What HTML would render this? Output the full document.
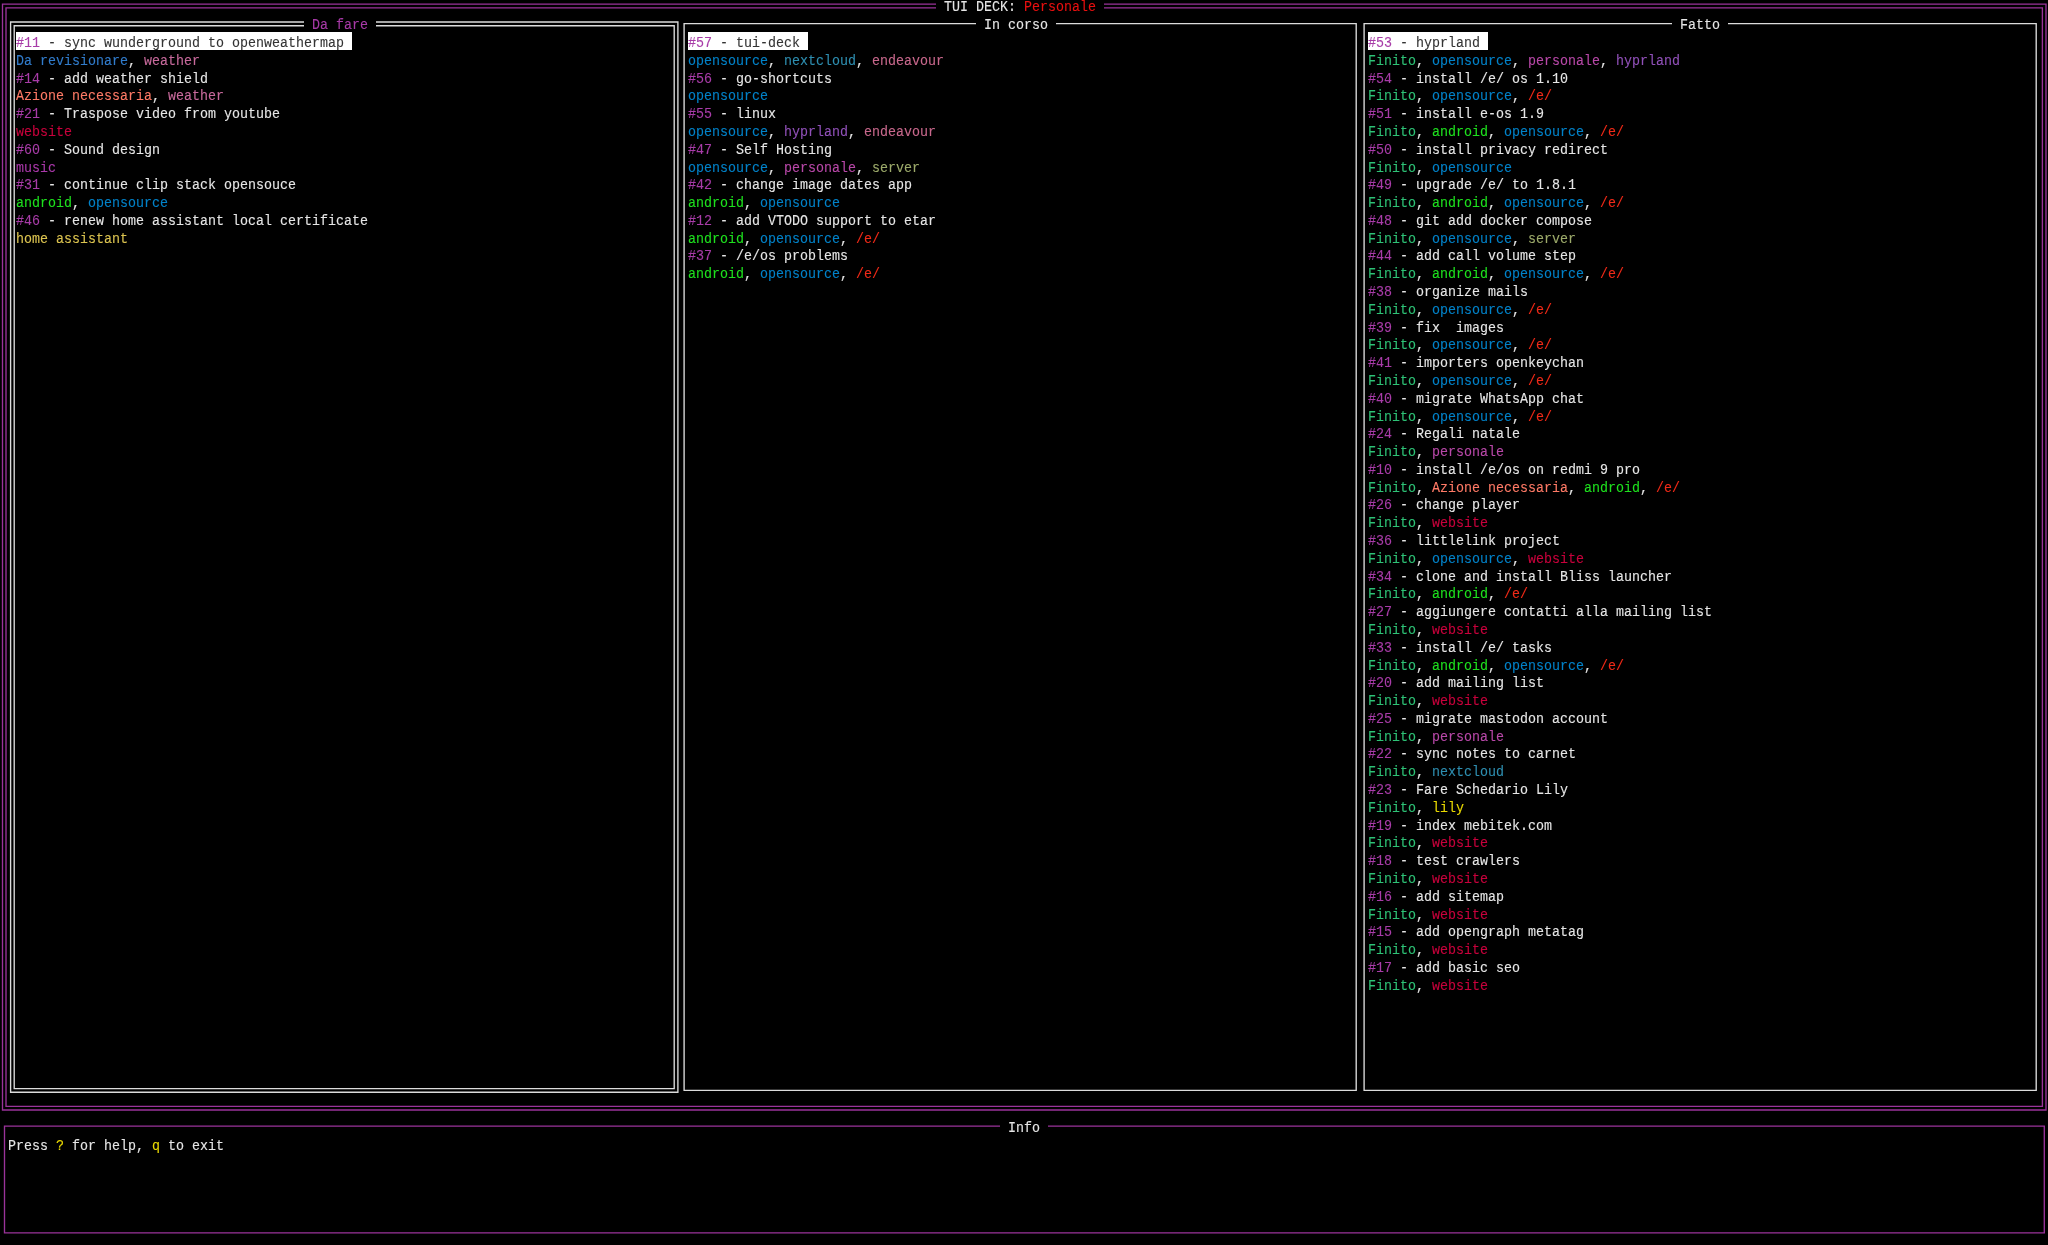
<!DOCTYPE html>
<html><head><meta charset="utf-8"><style>
html,body{margin:0;padding:0;background:#000;width:2048px;height:1245px;overflow:hidden;position:relative}
.t{position:absolute;white-space:pre;transform:scaleY(1.04);transform-origin:0 12.44px;-webkit-text-stroke:0.1px currentColor;font-family:"Liberation Mono",monospace;font-size:13.333px;line-height:17.786px;height:17.786px;color:#e6e6e6}
.hl{position:absolute;background:#fff}
#wrap{position:absolute;left:0;top:0;width:2048px;height:1245px;will-change:transform}
svg{position:absolute;left:0;top:0}
</style></head><body>
<svg width="2048" height="1245" viewBox="0 0 2048 1245" shape-rendering="geometricPrecision"><path d="M1104,4.15 H2046.0 V1110.0 H2.5 V4.15 H936" fill="none" stroke="#9a339a" stroke-width="1.35" stroke-linejoin="miter"/><path d="M1104,7.9 H2042.4 V1106.4 H6.0 V7.9 H936" fill="none" stroke="#9a339a" stroke-width="1.35" stroke-linejoin="miter"/><path d="M376,22.0 H677.9 V1092.2 H10.6 V22.0 H304" fill="none" stroke="#dcdcdc" stroke-width="1.35" stroke-linejoin="miter"/><path d="M376,25.7 H674.2 V1088.6 H14.2 V25.7 H304" fill="none" stroke="#dcdcdc" stroke-width="1.35" stroke-linejoin="miter"/><path d="M1056,23.6 H1356.2 V1090.4 H684.1 V23.6 H976" fill="none" stroke="#dcdcdc" stroke-width="1.35" stroke-linejoin="miter"/><path d="M1728,23.6 H2036.2 V1090.4 H1364.1 V23.6 H1672" fill="none" stroke="#dcdcdc" stroke-width="1.35" stroke-linejoin="miter"/><path d="M1048,1126.1 H2044.3 V1232.8 H4.5 V1126.1 H1000" fill="none" stroke="#9a339a" stroke-width="1.35" stroke-linejoin="miter"/></svg>
<div id="wrap">
<div class="hl" style="left:16.0px;top:32.2px;width:336.0px;height:17.70px"></div>
<div class="hl" style="left:688.0px;top:32.2px;width:120.0px;height:17.70px"></div>
<div class="hl" style="left:1368.0px;top:32.2px;width:120.0px;height:17.70px"></div>
<div class="t" style="left:16.0px;top:35.002px"><span style="color:#a83ca8">#11</span><span style="color:#333"> - sync wunderground to openweathermap</span></div>
<div class="t" style="left:16.0px;top:52.788px"><span style="color:#317ccc">Da revisionare</span><span style="color:#e6e6e6">, </span><span style="color:#c86a9c">weather</span></div>
<div class="t" style="left:16.0px;top:70.574px"><span style="color:#a83ca8">#14</span><span style="color:#e6e6e6"> - add weather shield</span></div>
<div class="t" style="left:16.0px;top:88.360px"><span style="color:#ff7a66">Azione necessaria</span><span style="color:#e6e6e6">, </span><span style="color:#c86a9c">weather</span></div>
<div class="t" style="left:16.0px;top:106.146px"><span style="color:#a83ca8">#21</span><span style="color:#e6e6e6"> - Traspose video from youtube</span></div>
<div class="t" style="left:16.0px;top:123.932px"><span style="color:#c8003c">website</span></div>
<div class="t" style="left:16.0px;top:141.718px"><span style="color:#a83ca8">#60</span><span style="color:#e6e6e6"> - Sound design</span></div>
<div class="t" style="left:16.0px;top:159.504px"><span style="color:#aa38aa">music</span></div>
<div class="t" style="left:16.0px;top:177.290px"><span style="color:#a83ca8">#31</span><span style="color:#e6e6e6"> - continue clip stack opensouce</span></div>
<div class="t" style="left:16.0px;top:195.076px"><span style="color:#1ee01e">android</span><span style="color:#e6e6e6">, </span><span style="color:#0082c9">opensource</span></div>
<div class="t" style="left:16.0px;top:212.862px"><span style="color:#a83ca8">#46</span><span style="color:#e6e6e6"> - renew home assistant local certificate</span></div>
<div class="t" style="left:16.0px;top:230.648px"><span style="color:#dcc450">home assistant</span></div>
<div class="t" style="left:688.0px;top:35.002px"><span style="color:#a83ca8">#57</span><span style="color:#333"> - tui-deck</span></div>
<div class="t" style="left:688.0px;top:52.788px"><span style="color:#0082c9">opensource</span><span style="color:#e6e6e6">, </span><span style="color:#2e8eb0">nextcloud</span><span style="color:#e6e6e6">, </span><span style="color:#c8688c">endeavour</span></div>
<div class="t" style="left:688.0px;top:70.574px"><span style="color:#a83ca8">#56</span><span style="color:#e6e6e6"> - go-shortcuts</span></div>
<div class="t" style="left:688.0px;top:88.360px"><span style="color:#0082c9">opensource</span></div>
<div class="t" style="left:688.0px;top:106.146px"><span style="color:#a83ca8">#55</span><span style="color:#e6e6e6"> - linux</span></div>
<div class="t" style="left:688.0px;top:123.932px"><span style="color:#0082c9">opensource</span><span style="color:#e6e6e6">, </span><span style="color:#9050b8">hyprland</span><span style="color:#e6e6e6">, </span><span style="color:#c8688c">endeavour</span></div>
<div class="t" style="left:688.0px;top:141.718px"><span style="color:#a83ca8">#47</span><span style="color:#e6e6e6"> - Self Hosting</span></div>
<div class="t" style="left:688.0px;top:159.504px"><span style="color:#0082c9">opensource</span><span style="color:#e6e6e6">, </span><span style="color:#b848a8">personale</span><span style="color:#e6e6e6">, </span><span style="color:#9caa6a">server</span></div>
<div class="t" style="left:688.0px;top:177.290px"><span style="color:#a83ca8">#42</span><span style="color:#e6e6e6"> - change image dates app</span></div>
<div class="t" style="left:688.0px;top:195.076px"><span style="color:#1ee01e">android</span><span style="color:#e6e6e6">, </span><span style="color:#0082c9">opensource</span></div>
<div class="t" style="left:688.0px;top:212.862px"><span style="color:#a83ca8">#12</span><span style="color:#e6e6e6"> - add VTODO support to etar</span></div>
<div class="t" style="left:688.0px;top:230.648px"><span style="color:#1ee01e">android</span><span style="color:#e6e6e6">, </span><span style="color:#0082c9">opensource</span><span style="color:#e6e6e6">, </span><span style="color:#f02a18">/e/</span></div>
<div class="t" style="left:688.0px;top:248.434px"><span style="color:#a83ca8">#37</span><span style="color:#e6e6e6"> - /e/os problems</span></div>
<div class="t" style="left:688.0px;top:266.220px"><span style="color:#1ee01e">android</span><span style="color:#e6e6e6">, </span><span style="color:#0082c9">opensource</span><span style="color:#e6e6e6">, </span><span style="color:#f02a18">/e/</span></div>
<div class="t" style="left:1368.0px;top:35.002px"><span style="color:#a83ca8">#53</span><span style="color:#333"> - hyprland</span></div>
<div class="t" style="left:1368.0px;top:52.788px"><span style="color:#2ec276">Finito</span><span style="color:#e6e6e6">, </span><span style="color:#0082c9">opensource</span><span style="color:#e6e6e6">, </span><span style="color:#b848a8">personale</span><span style="color:#e6e6e6">, </span><span style="color:#9050b8">hyprland</span></div>
<div class="t" style="left:1368.0px;top:70.574px"><span style="color:#a83ca8">#54</span><span style="color:#e6e6e6"> - install /e/ os 1.10</span></div>
<div class="t" style="left:1368.0px;top:88.360px"><span style="color:#2ec276">Finito</span><span style="color:#e6e6e6">, </span><span style="color:#0082c9">opensource</span><span style="color:#e6e6e6">, </span><span style="color:#f02a18">/e/</span></div>
<div class="t" style="left:1368.0px;top:106.146px"><span style="color:#a83ca8">#51</span><span style="color:#e6e6e6"> - install e-os 1.9</span></div>
<div class="t" style="left:1368.0px;top:123.932px"><span style="color:#2ec276">Finito</span><span style="color:#e6e6e6">, </span><span style="color:#1ee01e">android</span><span style="color:#e6e6e6">, </span><span style="color:#0082c9">opensource</span><span style="color:#e6e6e6">, </span><span style="color:#f02a18">/e/</span></div>
<div class="t" style="left:1368.0px;top:141.718px"><span style="color:#a83ca8">#50</span><span style="color:#e6e6e6"> - install privacy redirect</span></div>
<div class="t" style="left:1368.0px;top:159.504px"><span style="color:#2ec276">Finito</span><span style="color:#e6e6e6">, </span><span style="color:#0082c9">opensource</span></div>
<div class="t" style="left:1368.0px;top:177.290px"><span style="color:#a83ca8">#49</span><span style="color:#e6e6e6"> - upgrade /e/ to 1.8.1</span></div>
<div class="t" style="left:1368.0px;top:195.076px"><span style="color:#2ec276">Finito</span><span style="color:#e6e6e6">, </span><span style="color:#1ee01e">android</span><span style="color:#e6e6e6">, </span><span style="color:#0082c9">opensource</span><span style="color:#e6e6e6">, </span><span style="color:#f02a18">/e/</span></div>
<div class="t" style="left:1368.0px;top:212.862px"><span style="color:#a83ca8">#48</span><span style="color:#e6e6e6"> - git add docker compose</span></div>
<div class="t" style="left:1368.0px;top:230.648px"><span style="color:#2ec276">Finito</span><span style="color:#e6e6e6">, </span><span style="color:#0082c9">opensource</span><span style="color:#e6e6e6">, </span><span style="color:#9caa6a">server</span></div>
<div class="t" style="left:1368.0px;top:248.434px"><span style="color:#a83ca8">#44</span><span style="color:#e6e6e6"> - add call volume step</span></div>
<div class="t" style="left:1368.0px;top:266.220px"><span style="color:#2ec276">Finito</span><span style="color:#e6e6e6">, </span><span style="color:#1ee01e">android</span><span style="color:#e6e6e6">, </span><span style="color:#0082c9">opensource</span><span style="color:#e6e6e6">, </span><span style="color:#f02a18">/e/</span></div>
<div class="t" style="left:1368.0px;top:284.006px"><span style="color:#a83ca8">#38</span><span style="color:#e6e6e6"> - organize mails</span></div>
<div class="t" style="left:1368.0px;top:301.792px"><span style="color:#2ec276">Finito</span><span style="color:#e6e6e6">, </span><span style="color:#0082c9">opensource</span><span style="color:#e6e6e6">, </span><span style="color:#f02a18">/e/</span></div>
<div class="t" style="left:1368.0px;top:319.578px"><span style="color:#a83ca8">#39</span><span style="color:#e6e6e6"> - fix  images</span></div>
<div class="t" style="left:1368.0px;top:337.364px"><span style="color:#2ec276">Finito</span><span style="color:#e6e6e6">, </span><span style="color:#0082c9">opensource</span><span style="color:#e6e6e6">, </span><span style="color:#f02a18">/e/</span></div>
<div class="t" style="left:1368.0px;top:355.150px"><span style="color:#a83ca8">#41</span><span style="color:#e6e6e6"> - importers openkeychan</span></div>
<div class="t" style="left:1368.0px;top:372.936px"><span style="color:#2ec276">Finito</span><span style="color:#e6e6e6">, </span><span style="color:#0082c9">opensource</span><span style="color:#e6e6e6">, </span><span style="color:#f02a18">/e/</span></div>
<div class="t" style="left:1368.0px;top:390.722px"><span style="color:#a83ca8">#40</span><span style="color:#e6e6e6"> - migrate WhatsApp chat</span></div>
<div class="t" style="left:1368.0px;top:408.508px"><span style="color:#2ec276">Finito</span><span style="color:#e6e6e6">, </span><span style="color:#0082c9">opensource</span><span style="color:#e6e6e6">, </span><span style="color:#f02a18">/e/</span></div>
<div class="t" style="left:1368.0px;top:426.294px"><span style="color:#a83ca8">#24</span><span style="color:#e6e6e6"> - Regali natale</span></div>
<div class="t" style="left:1368.0px;top:444.080px"><span style="color:#2ec276">Finito</span><span style="color:#e6e6e6">, </span><span style="color:#b848a8">personale</span></div>
<div class="t" style="left:1368.0px;top:461.866px"><span style="color:#a83ca8">#10</span><span style="color:#e6e6e6"> - install /e/os on redmi 9 pro</span></div>
<div class="t" style="left:1368.0px;top:479.652px"><span style="color:#2ec276">Finito</span><span style="color:#e6e6e6">, </span><span style="color:#ff7a66">Azione necessaria</span><span style="color:#e6e6e6">, </span><span style="color:#1ee01e">android</span><span style="color:#e6e6e6">, </span><span style="color:#f02a18">/e/</span></div>
<div class="t" style="left:1368.0px;top:497.438px"><span style="color:#a83ca8">#26</span><span style="color:#e6e6e6"> - change player</span></div>
<div class="t" style="left:1368.0px;top:515.224px"><span style="color:#2ec276">Finito</span><span style="color:#e6e6e6">, </span><span style="color:#c8003c">website</span></div>
<div class="t" style="left:1368.0px;top:533.010px"><span style="color:#a83ca8">#36</span><span style="color:#e6e6e6"> - littlelink project</span></div>
<div class="t" style="left:1368.0px;top:550.796px"><span style="color:#2ec276">Finito</span><span style="color:#e6e6e6">, </span><span style="color:#0082c9">opensource</span><span style="color:#e6e6e6">, </span><span style="color:#c8003c">website</span></div>
<div class="t" style="left:1368.0px;top:568.582px"><span style="color:#a83ca8">#34</span><span style="color:#e6e6e6"> - clone and install Bliss launcher</span></div>
<div class="t" style="left:1368.0px;top:586.368px"><span style="color:#2ec276">Finito</span><span style="color:#e6e6e6">, </span><span style="color:#1ee01e">android</span><span style="color:#e6e6e6">, </span><span style="color:#f02a18">/e/</span></div>
<div class="t" style="left:1368.0px;top:604.154px"><span style="color:#a83ca8">#27</span><span style="color:#e6e6e6"> - aggiungere contatti alla mailing list</span></div>
<div class="t" style="left:1368.0px;top:621.940px"><span style="color:#2ec276">Finito</span><span style="color:#e6e6e6">, </span><span style="color:#c8003c">website</span></div>
<div class="t" style="left:1368.0px;top:639.726px"><span style="color:#a83ca8">#33</span><span style="color:#e6e6e6"> - install /e/ tasks</span></div>
<div class="t" style="left:1368.0px;top:657.512px"><span style="color:#2ec276">Finito</span><span style="color:#e6e6e6">, </span><span style="color:#1ee01e">android</span><span style="color:#e6e6e6">, </span><span style="color:#0082c9">opensource</span><span style="color:#e6e6e6">, </span><span style="color:#f02a18">/e/</span></div>
<div class="t" style="left:1368.0px;top:675.298px"><span style="color:#a83ca8">#20</span><span style="color:#e6e6e6"> - add mailing list</span></div>
<div class="t" style="left:1368.0px;top:693.084px"><span style="color:#2ec276">Finito</span><span style="color:#e6e6e6">, </span><span style="color:#c8003c">website</span></div>
<div class="t" style="left:1368.0px;top:710.870px"><span style="color:#a83ca8">#25</span><span style="color:#e6e6e6"> - migrate mastodon account</span></div>
<div class="t" style="left:1368.0px;top:728.656px"><span style="color:#2ec276">Finito</span><span style="color:#e6e6e6">, </span><span style="color:#b848a8">personale</span></div>
<div class="t" style="left:1368.0px;top:746.442px"><span style="color:#a83ca8">#22</span><span style="color:#e6e6e6"> - sync notes to carnet</span></div>
<div class="t" style="left:1368.0px;top:764.228px"><span style="color:#2ec276">Finito</span><span style="color:#e6e6e6">, </span><span style="color:#2e8eb0">nextcloud</span></div>
<div class="t" style="left:1368.0px;top:782.014px"><span style="color:#a83ca8">#23</span><span style="color:#e6e6e6"> - Fare Schedario Lily</span></div>
<div class="t" style="left:1368.0px;top:799.800px"><span style="color:#2ec276">Finito</span><span style="color:#e6e6e6">, </span><span style="color:#e8d800">lily</span></div>
<div class="t" style="left:1368.0px;top:817.586px"><span style="color:#a83ca8">#19</span><span style="color:#e6e6e6"> - index mebitek.com</span></div>
<div class="t" style="left:1368.0px;top:835.372px"><span style="color:#2ec276">Finito</span><span style="color:#e6e6e6">, </span><span style="color:#c8003c">website</span></div>
<div class="t" style="left:1368.0px;top:853.158px"><span style="color:#a83ca8">#18</span><span style="color:#e6e6e6"> - test crawlers</span></div>
<div class="t" style="left:1368.0px;top:870.944px"><span style="color:#2ec276">Finito</span><span style="color:#e6e6e6">, </span><span style="color:#c8003c">website</span></div>
<div class="t" style="left:1368.0px;top:888.730px"><span style="color:#a83ca8">#16</span><span style="color:#e6e6e6"> - add sitemap</span></div>
<div class="t" style="left:1368.0px;top:906.516px"><span style="color:#2ec276">Finito</span><span style="color:#e6e6e6">, </span><span style="color:#c8003c">website</span></div>
<div class="t" style="left:1368.0px;top:924.302px"><span style="color:#a83ca8">#15</span><span style="color:#e6e6e6"> - add opengraph metatag</span></div>
<div class="t" style="left:1368.0px;top:942.088px"><span style="color:#2ec276">Finito</span><span style="color:#e6e6e6">, </span><span style="color:#c8003c">website</span></div>
<div class="t" style="left:1368.0px;top:959.874px"><span style="color:#a83ca8">#17</span><span style="color:#e6e6e6"> - add basic seo</span></div>
<div class="t" style="left:1368.0px;top:977.660px"><span style="color:#2ec276">Finito</span><span style="color:#e6e6e6">, </span><span style="color:#c8003c">website</span></div>
<div class="t" style="left:944.0px;top:-0.570px"><span style="color:#e6e6e6">TUI DECK: </span><span style="color:#e81010">Personale</span></div>
<div class="t" style="left:312.0px;top:17.216px"><span style="color:#a83aa8">Da fare</span></div>
<div class="t" style="left:984.0px;top:17.216px"><span style="color:#e6e6e6">In corso</span></div>
<div class="t" style="left:1680.0px;top:17.216px"><span style="color:#e6e6e6">Fatto</span></div>
<div class="t" style="left:1008.0px;top:1119.948px"><span style="color:#e6e6e6">Info</span></div>
<div class="t" style="left:8.0px;top:1137.734px"><span style="color:#e6e6e6">Press </span><span style="color:#e8d800">?</span><span style="color:#e6e6e6"> for help, </span><span style="color:#e8d800">q</span><span style="color:#e6e6e6"> to exit</span></div>
</div>
</body></html>
